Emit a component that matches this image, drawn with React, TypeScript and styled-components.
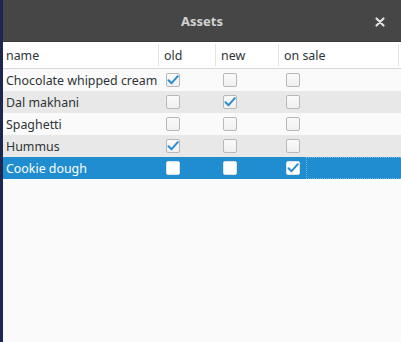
import React from 'react';
import styled, { createGlobalStyle } from 'styled-components';

const GlobalStyle = createGlobalStyle`
  html, body {
    margin: 0;
    padding: 0;
    height: 100%;
    background: #1c2750;
    overflow: hidden;
  }
  #root {
    height: 100%;
  }
`;

const Window = styled.div`
  margin-left: 3px;
  height: 342px;
  display: flex;
  flex-direction: column;
  background: #fafafa;
  font-family: 'Noto Sans', 'Open Sans', sans-serif;
  font-size: 12.4px;
  color: #2e3436;
`;

const TitleBar = styled.div`
  position: relative;
  height: 42px;
  flex: none;
  display: flex;
  align-items: center;
  justify-content: center;
  background: #464646;
  border-bottom: 1px solid #3a3a3a;
  box-sizing: border-box;
`;

const Title = styled.div`
  color: #d2d2d2;
  font-weight: bold;
  font-size: 13px;
  padding-top: 1px;
`;

const Close = styled.button`
  position: absolute;
  right: 14px;
  top: 15px;
  width: 14px;
  height: 14px;
  padding: 0;
  border: none;
  background: transparent;
  display: flex;
  align-items: center;
  justify-content: center;
`;

const HeaderRow = styled.div`
  display: grid;
  grid-template-columns: 155px 57px 63px 120px 1fr;
  height: 27px;
  background: #ffffff;
  border-bottom: 1px solid #d8d8d8;
  box-sizing: border-box;
`;

const HeaderCell = styled.div<{ $first?: boolean }>`
  display: flex;
  align-items: center;
  padding-left: ${p => (p.$first ? '3px' : '5px')};
  padding-top: 1px;
  border-left: ${p => (p.$first ? 'none' : '1px solid #e4e4e4')};
  margin: 2px 0;
  color: #2e3436;
`;

const Row = styled.div<{ $alt?: boolean; $selected?: boolean }>`
  display: grid;
  grid-template-columns: 155px 57px 63px minmax(0, 1fr);
  height: 22px;
  background: ${p => (p.$selected ? '#1f8dd0' : p.$alt ? '#e8e8e8' : '#fafafa')};
  color: ${p => (p.$selected ? '#ffffff' : '#2e3436')};
`;

const NameCell = styled.div`
  display: flex;
  align-items: center;
  padding-left: 3px;
  white-space: nowrap;
`;

const BoxCell = styled.div`
  display: flex;
  align-items: center;
  padding-left: 8px;
`;

const FocusRect = styled.span<{ $on?: boolean }>`
  flex: 1;
  align-self: stretch;
  margin-left: 6px;
  box-sizing: border-box;
  border: ${p => (p.$on ? '1px dotted rgba(255,255,255,0.35)' : 'none')};
  border-right: none;
`;

const Box = styled.span<{ $selected?: boolean }>`
  width: 14px;
  height: 14px;
  flex: none;
  box-sizing: border-box;
  border-radius: 2px;
  border: 1px solid ${p => (p.$selected ? '#e0e0e0' : '#b8b8b8')};
  background: ${p => (p.$selected ? '#ffffff' : 'linear-gradient(#fafafa, #f0f0f0)')};
  display: flex;
  align-items: center;
  justify-content: center;
`;

const Check = () => (
  <svg width="12" height="12" viewBox="0 0 12 12">
    <path d="M1.5 6.2 L4.6 9.2 L10.8 2.2" fill="none" stroke="#2a8cd2" strokeWidth="2" strokeLinecap="round" strokeLinejoin="round" />
  </svg>
);

const CheckBox = ({ checked, selected }: { checked: boolean; selected?: boolean }) => (
  <Box $selected={selected}>{checked && <Check />}</Box>
);

const items = [
  { name: 'Chocolate whipped cream', old: true, fresh: false, sale: false },
  { name: 'Dal makhani', old: false, fresh: true, sale: false },
  { name: 'Spaghetti', old: false, fresh: false, sale: false },
  { name: 'Hummus', old: true, fresh: false, sale: false },
  { name: 'Cookie dough', old: false, fresh: false, sale: true },
];

export default function App() {
  return (
    <>
      <GlobalStyle />
      <Window>
        <TitleBar>
          <Title>Assets</Title>
          <Close aria-label="close">
            <svg width="10" height="10" viewBox="0 0 10 10">
              <path d="M1.5 1.5 L8.5 8.5 M8.5 1.5 L1.5 8.5" stroke="#e0e0e0" strokeWidth="2.2" strokeLinecap="round" />
            </svg>
          </Close>
        </TitleBar>
        <HeaderRow>
          <HeaderCell $first>name</HeaderCell>
          <HeaderCell>old</HeaderCell>
          <HeaderCell>new</HeaderCell>
          <HeaderCell>on sale</HeaderCell>
          <HeaderCell />
        </HeaderRow>
        {items.map((it, i) => {
          const selected = i === items.length - 1;
          return (
            <Row key={it.name} $alt={i % 2 === 1} $selected={selected}>
              <NameCell>{it.name}</NameCell>
              <BoxCell><CheckBox checked={it.old} selected={selected} /></BoxCell>
              <BoxCell><CheckBox checked={it.fresh} selected={selected} /></BoxCell>
              <BoxCell>
                <CheckBox checked={it.sale} selected={selected} />
                <FocusRect $on={selected} />
              </BoxCell>
            </Row>
          );
        })}
      </Window>
    </>
  );
}
